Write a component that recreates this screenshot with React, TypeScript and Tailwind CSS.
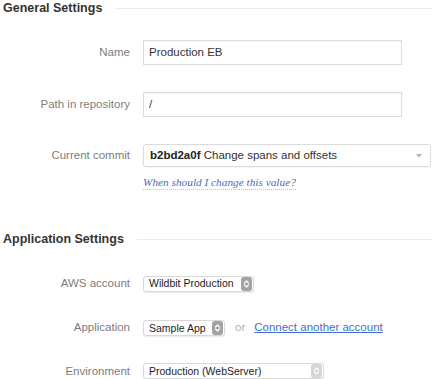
const sans = { fontFamily: '"Liberation Sans", Arial, sans-serif' };

function Heading({ title }: { title: string }) {
  return (
    <div className="flex h-4 items-center">
      <h2 className="text-[12.5px] font-bold leading-4 text-[#333]">{title}</h2>
      <div className="ml-[13px] h-px flex-1 bg-[#ececec]" />
    </div>
  );
}

function Row({ label, children, className = "" }: { label: string; children: React.ReactNode; className?: string }) {
  return (
    <div className={`grid grid-cols-[127px_1fr] items-center gap-x-[13px] ${className}`}>
      <label className="text-right text-[11.5px] text-[#7d7d7d]">{label}</label>
      <div className="flex items-center">{children}</div>
    </div>
  );
}

function Stepper({ muted = false }: { muted?: boolean }) {
  return (
    <span
      className={`flex h-[14px] w-[11px] shrink-0 items-center justify-center rounded-[3px] ${
        muted ? "bg-[#d6d6d6]" : "bg-[#a3a3a3]"
      }`}
    >
      <svg width="7" height="10" viewBox="0 0 7 10" fill="none" stroke="white" strokeWidth="1.2" strokeLinecap="round" strokeLinejoin="round">
        <path d="M1.5 4 L3.5 2 L5.5 4" />
        <path d="M1.5 6 L3.5 8 L5.5 6" />
      </svg>
    </span>
  );
}

function MacSelect({ value, width, muted }: { value: string; width: string; muted?: boolean }) {
  return (
    <div
      className={`flex h-4 shrink-0 items-center justify-between rounded-[3px] border border-[#d9d9d9] bg-white pl-[5px] pr-px shadow-[0_1px_1px_rgba(0,0,0,0.08)] ${width}`}
    >
      <span className="text-[10.5px] leading-none text-[#1e1e1e]">{value}</span>
      <Stepper muted={muted} />
    </div>
  );
}

export default function App() {
  return (
    <div className="min-h-screen bg-white px-[3px]" style={sans}>
      <Heading title="General Settings" />

      <Row label="Name" className="mt-6">
        <div className="flex h-[25px] w-[259px] items-center border border-[#dcdcdc] bg-white px-[5px] text-[11.5px] text-[#333] shadow-[inset_0_1px_1px_rgba(0,0,0,0.04)]">
          Production EB
        </div>
      </Row>

      <Row label="Path in repository" className="mt-[27px]">
        <div className="flex h-[25px] w-[259px] items-center border border-[#dcdcdc] bg-white px-[5px] text-[11.5px] text-[#333] shadow-[inset_0_1px_1px_rgba(0,0,0,0.04)]">
          /
        </div>
      </Row>

      <Row label="Current commit" className="mt-[27px]">
        <div className="flex h-[23px] w-[288px] items-center justify-between rounded-[3px] border border-[#dcdcdc] bg-white pl-[6px] pr-[8px] shadow-[0_1px_1px_rgba(0,0,0,0.04)]">
          <span className="text-[11.5px] text-[#333]">
            <span className="font-bold text-[#222]">b2bd2a0f</span> Change spans and offsets
          </span>
          <svg width="6" height="4" viewBox="0 0 6 4">
            <path d="M0 0 L6 0 L3 3.5 Z" fill="#b5b5b5" />
          </svg>
        </div>
      </Row>

      <Row label="" className="mt-2">
        <a
          className="border-b border-dotted border-[#b3c4e6] text-[11.3px] italic leading-[14px] text-[#4a6cbf]"
          style={{ fontFamily: '"Liberation Serif", "DejaVu Serif", serif' }}
        >
          When should I change this value?
        </a>
      </Row>

      <div className="mt-[41px]">
        <Heading title="Application Settings" />
      </div>

      <Row label="AWS account" className="mt-7">
        <MacSelect value="Wildbit Production" width="w-[111px]" />
      </Row>

      <Row label="Application" className="mt-[27px]">
        <MacSelect value="Sample App" width="w-[82px]" />
        <span className="ml-[10px] text-[11.5px] text-[#b0b0b0]">or</span>
        <a className="ml-[9px] text-[11.5px] text-[#3f6fd1] underline">Connect another account</a>
      </Row>

      <Row label="Environment" className="mt-[26px]">
        <MacSelect value="Production (WebServer)" width="w-[181px]" muted />
      </Row>
    </div>
  );
}
